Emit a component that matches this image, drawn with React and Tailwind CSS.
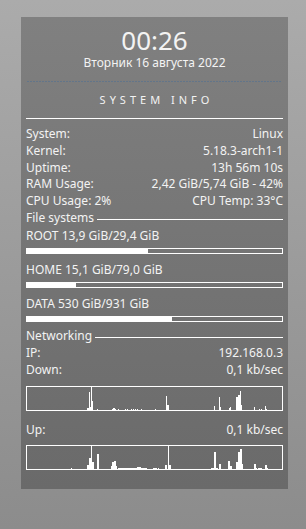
import React from 'react';

// sparse graph samples: pixel column (page x) -> bar height in px
const downSpikes = {
  87: 2, 88: 2, 89: 18, 90: 3, 91: 23, 92: 9, 97: 1, 112: 1, 113: 2, 114: 2, 115: 1,
  118: 1, 125: 1, 127: 1, 131: 1, 133: 1, 135: 1, 137: 1, 141: 1, 155: 1,
  166: 14, 167: 5, 168: 5, 214: 4, 219: 13, 220: 3, 229: 2, 230: 3,
  236: 13, 237: 13, 238: 15, 239: 15, 240: 19, 241: 5, 254: 3, 259: 1, 261: 1, 265: 4, 266: 1,
};

const upSpikes = {
  71: 1, 87: 4, 88: 4, 89: 11, 90: 11, 91: 23, 92: 7, 93: 7, 97: 15, 98: 15,
  111: 3, 112: 7, 113: 7, 114: 8, 115: 8, 116: 3,
  153: 1, 154: 1, 155: 1, 156: 1, 158: 1, 165: 4, 166: 4, 168: 23, 169: 4, 170: 4,
  211: 1, 212: 1, 213: 1, 214: 17, 215: 17, 216: 1, 217: 1, 219: 5, 220: 5,
  228: 8, 229: 8, 230: 3, 231: 3, 236: 7, 237: 7, 238: 17, 239: 17, 240: 20, 241: 20, 242: 5,
  254: 5, 255: 5, 256: 1, 258: 1, 259: 1, 260: 1, 261: 1, 265: 4, 266: 4, 267: 1,
};
// flat trickle on the upload graph
for (let x = 118; x <= 146; x++) upSpikes[x] = x >= 137 && x <= 140 ? 2 : 1;

const toSamples = (spikes) =>
  Array.from({ length: 255 }, (_, i) => spikes[i + 27] || 0);

const fileSystems = [
  { name: 'ROOT', used: '13,9 GiB', total: '29,4 GiB', pct: 47.3 },
  { name: 'HOME', used: '15,1 GiB', total: '79,0 GiB', pct: 19.1 },
  { name: 'DATA', used: '530 GiB', total: '931 GiB', pct: 56.9 },
];

const Row = ({ left, right }) => (
  <div className="flex justify-between text-[12px] leading-[16.8px]">
    <span>{left}</span>
    <span>{right}</span>
  </div>
);

const SectionTitle = ({ children }) => (
  <div className="flex items-center text-[12px] leading-[16.8px]">
    <span>{children}</span>
    <div className="ml-[3px] mt-[2px] h-px flex-1 bg-white"></div>
  </div>
);

const Graph = ({ samples }) => (
  <div className="flex h-[25px] items-end border border-white">
    {samples.map((h, i) => (
      <div key={i} className="w-px shrink-0 bg-white" style={{ height: h }}></div>
    ))}
  </div>
);

const App = () => {
  const down = toSamples(downSpikes);
  const up = toSamples(upSpikes);

  return (
    <div className="h-[529px] w-full bg-linear-to-b from-[#ababab] to-[#8c8c8c] pl-[21px] pt-[17px] font-['Noto_Sans',sans-serif] text-[#f3f3f3]">
      <div className="h-[472px] w-[267px] bg-linear-to-b from-[#808080] to-[#6a6a6a] px-[5px] pt-[7.5px]">
        {/* Clock */}
        <div className="text-center text-[26px] leading-[30px]">00:26</div>
        <div className="text-center text-[12px] leading-[16px]">Вторник 16 августа 2022</div>

        <div className="ml-px mr-[2px] mt-[10.5px] h-px bg-[image:repeating-linear-gradient(to_right,#62758a_0px,#62758a_2px,transparent_2px,transparent_3px)]"></div>

        {/* System info */}
        <div className="mt-[11px] pl-[4px] text-center text-[11px] leading-[13px] tracking-[4px]">SYSTEM INFO</div>
        <div className="mt-[12px] h-px bg-white"></div>

        <div className="mt-[7px]">
          <Row left="System:" right="Linux" />
          <Row left="Kernel:" right="5.18.3-arch1-1" />
          <Row left="Uptime:" right="13h 56m 10s" />
          <Row left="RAM Usage:" right="2,42 GiB/5,74 GiB - 42%" />
          <Row left="CPU Usage: 2%" right="CPU Temp: 33°C" />
          <SectionTitle>File systems</SectionTitle>
        </div>

        {fileSystems.map((fs, i) => (
          <div key={fs.name} className={i > 0 ? 'mt-[7px]' : ''}>
            <div className="text-[12px] leading-[17px]">
              {fs.name} {fs.used}/{fs.total}
            </div>
            <div className="mt-[4px] h-[6px] border border-white">
              <div className="h-full bg-white" style={{ width: `${fs.pct}%` }}></div>
            </div>
          </div>
        ))}

        {/* Networking */}
        <div className="mt-[6.5px]">
          <SectionTitle>Networking</SectionTitle>
          <Row left="IP:" right="192.168.0.3" />
          <Row left="Down:" right="0,1 kb/sec" />
        </div>
        <div className="mt-[7px]">
          <Graph samples={down} />
        </div>

        <div className="mt-[11px]">
          <Row left="Up:" right="0,1 kb/sec" />
        </div>
        <div className="mt-[6.5px]">
          <Graph samples={up} />
        </div>
      </div>
    </div>
  );
};

export default App;
